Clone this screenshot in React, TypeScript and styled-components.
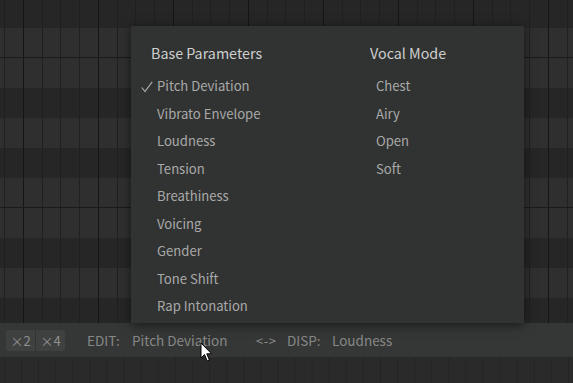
import React from "react";
import styled, { createGlobalStyle } from "styled-components";

const Global = createGlobalStyle`
  html, body { margin: 0; padding: 0; background: #2a2a2a; }
  body { font-family: "Noto Sans CJK SC", "Noto Sans", sans-serif; }
  #root { width: 573px; height: 383px; overflow: hidden; }
`;

const Page = styled.div`
  position: relative;
  width: 573px;
  height: 383px;
  display: flex;
  flex-direction: column;
  overflow: hidden;
`;

const Roll = styled.div`
  height: 323px;
  display: flex;
  flex-direction: column;
  overflow: hidden;
`;

const Row = styled.div<{ $dark: boolean; $h: number; $line: boolean }>`
  flex: 0 0 ${(p) => p.$h}px;
  box-sizing: border-box;
  background-color: ${(p) => (p.$dark ? "#262626" : "#2f2f2f")};
  border-bottom: ${(p) => (p.$line ? "1px solid #1a1a1a" : "none")};
  background-image: linear-gradient(
    to right,
    #151515 0 1px,
    transparent 1px 18.75px,
    #202020 18.75px 19.75px,
    transparent 19.75px 37.5px,
    #202020 37.5px 38.5px,
    transparent 38.5px 56.25px,
    #202020 56.25px 57.25px,
    transparent 57.25px 75px
  );
  background-size: 75px 100%;
  background-position: 23px 0;
`;

const Toolbar = styled.div`
  height: 34px;
  flex: 0 0 34px;
  background: #353736;
  display: flex;
  align-items: center;
  padding-left: 6px;
  color: #878787;
  font-size: 13.5px;
`;

const Toggle = styled.div`
  display: flex;
  height: 21px;
  border-radius: 3px;
  background: #3f4140;
  overflow: hidden;
  margin-right: 22px;
`;

const ToggleBtn = styled.div<{ $first?: boolean }>`
  width: 29px;
  display: flex;
  align-items: center;
  justify-content: center;
  font-size: 13px;
  color: #909090;
  border-right: ${(p) => (p.$first ? "1px solid #333534" : "none")};
`;

const Label = styled.span<{ $w?: number }>`
  display: inline-block;
  width: ${(p) => (p.$w ? `${p.$w}px` : "auto")};
  white-space: nowrap;
`;

const Arrows = styled.span`
  display: inline-block;
  width: 31px;
  font-size: 13px;
  letter-spacing: 0.5px;
`;

const Lane = styled.div`
  flex: 1;
  background-color: #2a2a2a;
  background-image: linear-gradient(to right, #242424 0 1px, transparent 1px 17.1px);
  background-size: 17.1px 100%;
  background-position: 21px 0;
`;

const Menu = styled.div`
  position: absolute;
  left: 131px;
  top: 26px;
  width: 393px;
  height: 297px;
  box-sizing: border-box;
  background: #313332;
  box-shadow: 0 2px 10px rgba(0, 0, 0, 0.55);
  padding: 12px 0 0 20px;
  display: grid;
  grid-template-columns: 219px 1fr;
`;

const Column = styled.div`
  display: flex;
  flex-direction: column;
`;

const Header = styled.div`
  height: 30px;
  line-height: 30px;
  margin-bottom: 4px;
  font-size: 14.3px;
  color: #cfcfcf;
`;

const Item = styled.div`
  position: relative;
  height: 27.5px;
  line-height: 28px;
  padding-left: 6px;
  font-size: 13.1px;
  color: #a9a9a9;
  white-space: nowrap;
`;

const Check = styled.svg`
  position: absolute;
  left: -10px;
  top: 9px;
`;

const Cursor = styled.svg`
  position: absolute;
  left: 200px;
  top: 342px;
`;

const rows: { dark: boolean; h: number; line: boolean }[] = [
  { dark: true, h: 28, line: false },
  { dark: false, h: 30, line: true },
  { dark: false, h: 30, line: false },
  { dark: true, h: 30, line: false },
  { dark: false, h: 30, line: false },
  { dark: true, h: 30, line: false },
  { dark: false, h: 30, line: true },
  { dark: false, h: 30, line: false },
  { dark: true, h: 30, line: false },
  { dark: false, h: 30, line: false },
  { dark: true, h: 30, line: false },
];

const baseParams = [
  "Pitch Deviation",
  "Vibrato Envelope",
  "Loudness",
  "Tension",
  "Breathiness",
  "Voicing",
  "Gender",
  "Tone Shift",
  "Rap Intonation",
];

const vocalModes = ["Chest", "Airy", "Open", "Soft"];

export default function App() {
  return (
    <Page>
      <Global />
      <Roll>
        {rows.map((r, i) => (
          <Row key={i} $dark={r.dark} $h={r.h} $line={r.line} />
        ))}
      </Roll>
      <Toolbar>
        <Toggle>
          <ToggleBtn $first>×2</ToggleBtn>
          <ToggleBtn>×4</ToggleBtn>
        </Toggle>
        <Label $w={45}>EDIT:</Label>
        <Label $w={124}>Pitch Deviation</Label>
        <Arrows>&lt;-&gt;</Arrows>
        <Label $w={45}>DISP:</Label>
        <Label>Loudness</Label>
      </Toolbar>
      <Lane />
      <Menu>
        <Column>
          <Header>Base Parameters</Header>
          {baseParams.map((p, i) => (
            <Item key={p}>
              {i === 0 && (
                <Check width="12" height="12" viewBox="0 0 12 12">
                  <path d="M0.8 6.5 L4 10.5 L11.2 0.8" fill="none" stroke="#a9a9a9" strokeWidth="1.2" />
                </Check>
              )}
              {p}
            </Item>
          ))}
        </Column>
        <Column>
          <Header>Vocal Mode</Header>
          {vocalModes.map((m) => (
            <Item key={m}>{m}</Item>
          ))}
        </Column>
      </Menu>
      <Cursor width="13" height="21" viewBox="0 0 13 21">
        <path
          d="M1 1 L1 16 L4.5 12.6 L7.2 19 L9.4 18 L6.8 11.8 L11.6 11.8 Z"
          fill="#ffffff"
          stroke="#000000"
          strokeWidth="1"
          strokeLinejoin="miter"
        />
      </Cursor>
    </Page>
  );
}
